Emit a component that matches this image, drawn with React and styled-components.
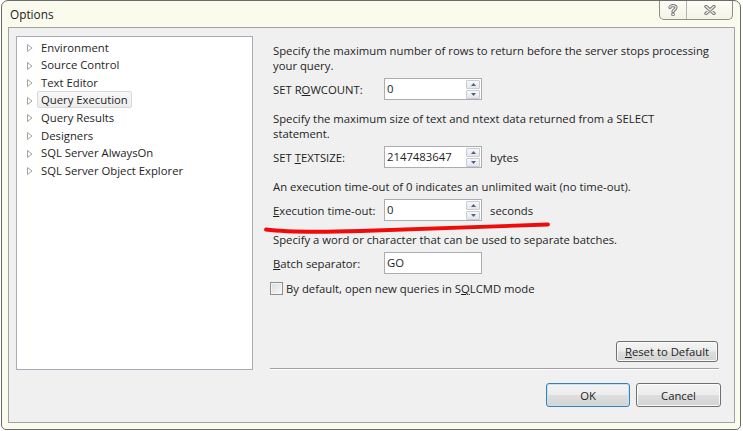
import React from "react";
import styled, { createGlobalStyle } from "styled-components";

const GlobalStyle = createGlobalStyle`
  html, body { margin: 0; padding: 0; background: #ffffff; }
  body {
    font-family: "Open Sans", "Liberation Sans", sans-serif;
    font-size: 11.3px;
    color: #1e1e1e;
  }
`;

const Page = styled.div`
  position: relative;
  width: 743px;
  height: 431px;
  overflow: hidden;
`;

const Window = styled.div`
  box-sizing: border-box;
  margin-left: 1px;
  width: 740px;
  height: 430px;
  background: #fbfbed;
  border: 1px solid #6b6b6b;
  border-radius: 7px 7px 5px 5px;
  display: flex;
  flex-direction: column;
  padding: 0 5px 6px 6px;
`;

const TitleBar = styled.div`
  height: 27px;
  display: flex;
  justify-content: space-between;
  align-items: flex-start;
`;

const Title = styled.div`
  margin: 5px 0 0 2px;
  font-size: 11.8px;
  line-height: 16px;
  color: #1a1a1a;
`;

const CaptionGroup = styled.div`
  display: flex;
  margin-right: 2px;
  height: 18px;
  border: 1px solid #8d8d8d;
  border-top: none;
  border-radius: 0 0 5px 5px;
  overflow: hidden;
  background: linear-gradient(#fdfdf6, #f3f3e6);
`;

const CaptionButton = styled.div`
  width: ${(p) => p.$w}px;
  display: flex;
  align-items: center;
  justify-content: center;
  & + & { border-left: 1px solid #b5b5ad; }
`;

const Client = styled.div`
  flex: 1;
  display: flex;
  flex-direction: column;
  background: #f0f0f0;
  border: 1px solid #a3a3a3;
  padding: 8px 13px 15px 7px;
`;

const Main = styled.div`
  display: flex;
  height: 334px;
`;

const Tree = styled.div`
  box-sizing: border-box;
  width: 237px;
  background: #ffffff;
  border: 1px solid #a9aab5;
  padding-top: 1.5px;
`;

const TreeRow = styled.div`
  height: 17.55px;
  display: flex;
  align-items: center;
  padding-left: 10px;
  white-space: nowrap;
`;

const Arrow = styled.svg`
  width: 6px;
  height: 8px;
  margin: 2px 8px 0 0;
  flex: none;
`;

const TreeLabel = styled.span`
  margin-left: -4px;
  padding: 0 3px;
  height: 15px;
  line-height: 15px;
  border: 1px solid ${(p) => (p.$selected ? "#d9d9d9" : "transparent")};
  border-radius: 2px;
  background: ${(p) => (p.$selected ? "linear-gradient(#f8f8f8, #ededed)" : "transparent")};
`;

const RightPanel = styled.div`
  flex: 1;
  margin-left: 17px;
  padding-top: 7px;
  display: flex;
  flex-direction: column;
`;

const Section = styled.div`
  & + & { margin-top: 11px; }
`;

const Desc = styled.div`
  padding-left: 3px;
  line-height: 15px;
  white-space: nowrap;
`;

const FieldRow = styled.div`
  display: flex;
  align-items: center;
  margin-top: 5px;
  padding-left: 3px;
`;

const FieldLabel = styled.div`
  width: 111px;
`;

const InputBox = styled.div`
  position: relative;
  box-sizing: border-box;
  width: 98px;
  height: 22px;
  background: #ffffff;
  border: 1px solid #abadb3;
  padding: 1px 2px;
  line-height: 17px;
`;

const Spinner = styled.div`
  position: absolute;
  top: 1px;
  right: 1px;
  width: 14px;
  display: flex;
  flex-direction: column;
  gap: 1px;
`;

const SpinHalf = styled.div`
  box-sizing: border-box;
  height: 9px;
  border: 1px solid #c9ccd3;
  border-radius: 1px;
  background: linear-gradient(#f7f7f7, #e4e6ea);
  display: flex;
  align-items: center;
  justify-content: center;
`;

const Unit = styled.div`
  margin-left: 8px;
`;

const CheckRow = styled.div`
  display: flex;
  align-items: center;
  margin-top: 7px;
`;

const CheckBox = styled.div`
  box-sizing: border-box;
  width: 13px;
  height: 13px;
  border: 1px solid #8f8f8f;
  background: linear-gradient(135deg, #dcdcdc, #f8f8f8);
  box-shadow: inset 0 0 0 1px #f4f4f4;
  margin-right: 3px;
`;

const Button = styled.div`
  box-sizing: border-box;
  width: ${(p) => p.$w}px;
  height: ${(p) => p.$h}px;
  display: flex;
  align-items: center;
  justify-content: center;
  border: 1px solid ${(p) => (p.$default ? "#3c7fb1" : "#707070")};
  border-radius: 3px;
  background: linear-gradient(#f4f4f4 0%, #ececec 48%, #dedede 52%, #d3d3d3 100%);
  box-shadow: inset 0 0 0 1px ${(p) => (p.$default ? "#c4e5f6" : "#fbfbfb")};
  color: #1e1e1e;
`;

const ResetWrap = styled.div`
  margin-top: auto;
  margin-right: 3px;
  margin-bottom: 6px;
  display: flex;
  justify-content: flex-end;
`;

const Separator = styled.div`
  margin-right: 2px;
  border-top: 1px solid #a0a0a0;
  border-bottom: 1px solid #ffffff;
`;

const ButtonRow = styled.div`
  margin-top: 13px;
  display: flex;
  justify-content: flex-end;
  gap: 6px;
`;

const Overlay = styled.svg`
  position: absolute;
  left: 0;
  top: 0;
  pointer-events: none;
`;

const treeItems = [
  "Environment",
  "Source Control",
  "Text Editor",
  "Query Execution",
  "Query Results",
  "Designers",
  "SQL Server AlwaysOn",
  "SQL Server Object Explorer",
];

function TreeArrow() {
  return (
    <Arrow viewBox="0 0 6 8">
      <path d="M0.5 0.5 L5 4 L0.5 7.5 Z" fill="#ffffff" stroke="#a3a3a3" strokeWidth="1" />
    </Arrow>
  );
}

function SpinBox({ value }) {
  return (
    <InputBox>
      {value}
      <Spinner>
        <SpinHalf>
          <svg width="5" height="3" viewBox="0 0 5 3">
            <path d="M0 3 L2.5 0 L5 3 Z" fill="#4d6185" />
          </svg>
        </SpinHalf>
        <SpinHalf>
          <svg width="5" height="3" viewBox="0 0 5 3">
            <path d="M0 0 L2.5 3 L5 0 Z" fill="#4d6185" />
          </svg>
        </SpinHalf>
      </Spinner>
    </InputBox>
  );
}

export default function App() {
  return (
    <Page>
      <GlobalStyle />
      <Window>
        <TitleBar>
          <Title>Options</Title>
          <CaptionGroup>
            <CaptionButton $w={26}>
              <svg width="10" height="12" viewBox="0 0 10 12">
                <path d="M2 3.5 C2 1 8 1 8 3.6 C8 5.6 5 5.6 5 7.8" fill="none" stroke="#777" strokeWidth="3.2" strokeLinecap="round" />
                <path d="M2 3.5 C2 1 8 1 8 3.6 C8 5.6 5 5.6 5 7.8" fill="none" stroke="#ececec" strokeWidth="1.2" strokeLinecap="round" />
                <circle cx="5" cy="10.4" r="1.5" fill="#ececec" stroke="#777" strokeWidth="1" />
              </svg>
            </CaptionButton>
            <CaptionButton $w={45}>
              <svg width="12" height="10" viewBox="0 0 12 10">
                <path d="M2 1.5 L10 8.5 M10 1.5 L2 8.5" stroke="#777" strokeWidth="3.4" strokeLinecap="round" />
                <path d="M2 1.5 L10 8.5 M10 1.5 L2 8.5" stroke="#ececec" strokeWidth="1.4" strokeLinecap="round" />
              </svg>
            </CaptionButton>
          </CaptionGroup>
        </TitleBar>
        <Client>
          <Main>
            <Tree>
              {treeItems.map((item) => (
                <TreeRow key={item}>
                  <TreeArrow />
                  <TreeLabel $selected={item === "Query Execution"}>{item}</TreeLabel>
                </TreeRow>
              ))}
            </Tree>
            <RightPanel>
              <Section>
                <Desc>
                  Specify the maximum number of rows to return before the server stops processing
                  <br />
                  your query.
                </Desc>
                <FieldRow>
                  <FieldLabel>
                    SET R<u>O</u>WCOUNT:
                  </FieldLabel>
                  <SpinBox value="0" />
                </FieldRow>
              </Section>
              <Section>
                <Desc>
                  Specify the maximum size of text and ntext data returned from a SELECT
                  <br />
                  statement.
                </Desc>
                <FieldRow>
                  <FieldLabel>
                    SET <u>T</u>EXTSIZE:
                  </FieldLabel>
                  <SpinBox value="2147483647" />
                  <Unit>bytes</Unit>
                </FieldRow>
              </Section>
              <Section>
                <Desc>An execution time-out of 0 indicates an unlimited wait (no time-out).</Desc>
                <FieldRow>
                  <FieldLabel>
                    <u>E</u>xecution time-out:
                  </FieldLabel>
                  <SpinBox value="0" />
                  <Unit>seconds</Unit>
                </FieldRow>
              </Section>
              <Section>
                <Desc>Specify a word or character that can be used to separate batches.</Desc>
                <FieldRow>
                  <FieldLabel>
                    <u>B</u>atch separator:
                  </FieldLabel>
                  <InputBox>GO</InputBox>
                </FieldRow>
              </Section>
              <CheckRow>
                <CheckBox />
                <span>
                  By default, open new queries in S<u>Q</u>LCMD mode
                </span>
              </CheckRow>
              <ResetWrap>
                <Button $w={102} $h={21}>
                  <span>
                    <u>R</u>eset to Default
                  </span>
                </Button>
              </ResetWrap>
              <Separator />
            </RightPanel>
          </Main>
          <ButtonRow>
            <Button $w={84} $h={24} $default>
              OK
            </Button>
            <Button $w={85} $h={24}>
              Cancel
            </Button>
          </ButtonRow>
        </Client>
      </Window>
      <Overlay width="743" height="431" viewBox="0 0 743 431">
        <path
          d="M266 229.5 C285 232 310 232.5 360 231 C430 229 500 226 548 224.5"
          fill="none"
          stroke="#f00a0a"
          strokeWidth="3.8"
          strokeLinecap="round"
        />
      </Overlay>
    </Page>
  );
}
